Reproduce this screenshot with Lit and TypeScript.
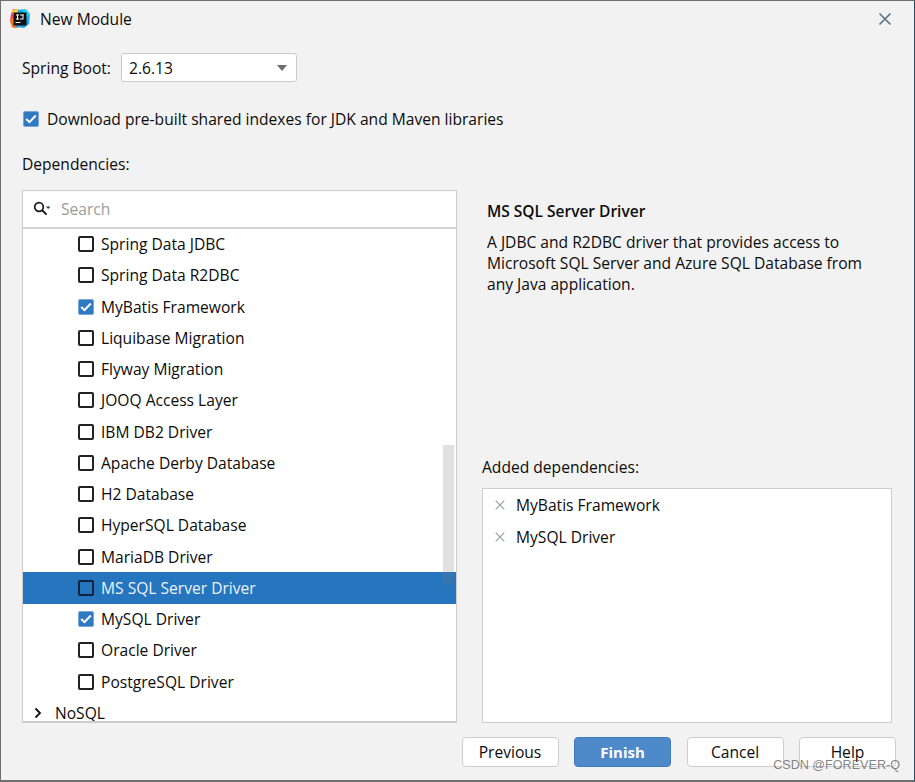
import { LitElement, html, css, svg } from "lit";
import { customElement } from "lit/decorators.js";

const rows: [string, boolean, boolean][] = [
  ["Spring Data JDBC", false, false],
  ["Spring Data R2DBC", false, false],
  ["MyBatis Framework", true, false],
  ["Liquibase Migration", false, false],
  ["Flyway Migration", false, false],
  ["JOOQ Access Layer", false, false],
  ["IBM DB2 Driver", false, false],
  ["Apache Derby Database", false, false],
  ["H2 Database", false, false],
  ["HyperSQL Database", false, false],
  ["MariaDB Driver", false, false],
  ["MS SQL Server Driver", false, true],
  ["MySQL Driver", true, false],
  ["Oracle Driver", false, false],
  ["PostgreSQL Driver", false, false],
];

const logo = svg`<svg class="logo" width="20" height="20" viewBox="0 0 20 20">
  <path d="M3 0 L9 1 L6 19 L2 18 L0 12 L1 5Z" fill="#fb3b78"/>
  <path d="M0 12 L3 8 L8 19 L3 19Z" fill="#f97a12"/>
  <path d="M2 1 L9 0 L9 5 L3 6Z" fill="#f6d32d"/>
  <path d="M8 1 L15 0 L20 5 L19 15 L14 19 L6 18Z" fill="#1aa3f0"/>
  <path d="M12 0 L17 1 L20 6 L16 9Z" fill="#22d3ee"/>
  <rect x="3.5" y="3.5" width="13" height="13" fill="#111"/>
  <rect x="6" y="5.5" width="3" height="1" fill="#fff"/><rect x="7" y="5.5" width="1" height="5" fill="#fff"/><rect x="6" y="9.5" width="3" height="1" fill="#fff"/>
  <rect x="10" y="5.5" width="3.5" height="1" fill="#fff"/><rect x="12.5" y="5.5" width="1" height="5" fill="#fff"/><rect x="10" y="9.5" width="2.5" height="1" fill="#fff"/>
  <rect x="5.5" y="13" width="5" height="1" fill="#fff"/>
</svg>`;

const closeIcon = svg`<svg width="14" height="14" viewBox="0 0 14 14"><path d="M1.5 1.5 L12.5 12.5 M12.5 1.5 L1.5 12.5" stroke="#5c7486" stroke-width="1.7" fill="none"/></svg>`;

const removeIcon = svg`<svg width="10" height="10" viewBox="0 0 10 10"><path d="M.7 .7 L9.3 9.3 M9.3 .7 L.7 9.3" stroke="#9aa0a6" stroke-width="1.2" fill="none"/></svg>`;

const searchIcon = svg`<svg width="18" height="16" viewBox="0 0 18 16"><circle cx="6" cy="6" r="4.3" fill="none" stroke="#1a1a1a" stroke-width="1.7"/><path d="M9.2 9.2 L13.6 13.6" stroke="#1a1a1a" stroke-width="2"/><path d="M13 5.5 H17.4 L15.2 8Z" fill="#333"/></svg>`;

const chevron = svg`<svg width="8" height="12" viewBox="0 0 8 12"><path d="M1.5 1.5 L6 6 L1.5 10.5" stroke="#111" stroke-width="1.8" fill="none"/></svg>`;

@customElement("app-root")
export class AppRoot extends LitElement {
  static styles = css`
    :host {
      display: block;
      width: 915px;
      height: 782px;
      font-family: "Open Sans", "Noto Sans", sans-serif;
      font-size: 15.6px;
      color: #0c0c0c;
    }
    .win {
      box-sizing: border-box;
      width: 915px;
      height: 782px;
      background: #f2f2f2;
      border-top: 1px solid #6f6f6f;
      border-left: 1px solid #6f6f6f;
      border-right: 1px solid #2b4a66;
      border-bottom: 2px solid #6f6f6f;
      display: flex;
      flex-direction: column;
      position: relative;
      overflow: hidden;
    }
    .title {
      height: 36px;
      display: flex;
      align-items: center;
      padding: 0 22px 0 9px;
      gap: 10px;
      flex: none;
    }
    .title .name { flex: 1; }
    .title svg { display: block; }
    .boot {
      display: flex;
      align-items: center;
      gap: 10px;
      margin: 16px 0 0 21px;
      height: 29px;
    }
    .combo {
      box-sizing: border-box;
      width: 176px;
      height: 29px;
      background: #fff;
      border: 1px solid #c9c9c9;
      border-radius: 3px;
      display: flex;
      align-items: center;
      justify-content: space-between;
      padding: 0 9px 0 7px;
    }
    .arrow {
      width: 0;
      height: 0;
      border-left: 5.5px solid transparent;
      border-right: 5.5px solid transparent;
      border-top: 6px solid #6e6e6e;
    }
    .cbrow {
      display: flex;
      align-items: center;
      gap: 8px;
      margin: 22.5px 0 0 22px;
      height: 29px;
    }
    .cb {
      box-sizing: border-box;
      width: 16px;
      height: 16px;
      border-radius: 2px;
      border: 2px solid #222;
      background: #fff;
      flex: none;
      display: flex;
      align-items: center;
      justify-content: center;
    }
    .cb.on { background: #2f78c2; border: 1px solid #7aa7d6; }
    .cb.sel { background: transparent; border-color: #10233a; }
    .cb svg { display: block; }
    .deps { margin: 15.5px 0 0 21px; height: 29px; display: flex; align-items: center; }
    .main {
      display: flex;
      margin: 12px 0 0 21px;
      height: 533px;
      flex: none;
    }
    .left {
      box-sizing: border-box;
      width: 435px;
      flex: none;
      border: 1px solid #cdcdcd;
      border-bottom-width: 2px;
      background: #fff;
      display: flex;
      flex-direction: column;
      position: relative;
      overflow: hidden;
    }
    .search {
      box-sizing: border-box;
      height: 37.5px;
      flex: none;
      border-bottom: 2px solid #d4d4d4;
      display: flex;
      align-items: center;
      padding-left: 10px;
      gap: 10px;
      color: #9b9b9b;
    }
    .list { flex: 1; overflow: hidden; }
    .row {
      height: 31.25px;
      display: flex;
      align-items: center;
      padding-left: 55px;
      gap: 7px;
    }
    .row.sel { background: #2675bf; color: #eaf2fa; }
    .group { padding-left: 11px; gap: 13px; }
    .thumb {
      position: absolute;
      right: 2px;
      top: 254px;
      width: 11px;
      height: 140px;
      background: rgba(120, 120, 120, 0.22);
    }
    .right {
      flex: 1;
      display: flex;
      flex-direction: column;
      min-width: 0;
    }
    .info { flex: 1; padding: 1px 40px 0 30px; }
    .info h2 {
      margin: 9px 0 10px;
      font-size: 15.5px;
      font-weight: 600;
      line-height: 22px;
      color: #0c0c0c;
    }
    .info p { margin: 0; line-height: 21px; }
    .added-label { margin-left: 25px; height: 22px; display: flex; align-items: center; }
    .added {
      box-sizing: border-box;
      margin: 10px 22px 0 25px;
      height: 235px;
      background: #fff;
      border: 1px solid #cdcdcd;
      padding: 0 0 0 12px;
    }
    .item {
      height: 32px;
      display: flex;
      align-items: center;
      gap: 11px;
    }
    .item svg { display: block; }
    .buttons {
      display: flex;
      justify-content: flex-end;
      gap: 15.5px;
      padding: 14px 18px 0 0;
    }
    .btn {
      box-sizing: border-box;
      width: 97px;
      height: 30px;
      background: #fff;
      border: 1px solid #cdcdcd;
      border-radius: 4px;
      display: flex;
      align-items: center;
      justify-content: center;
    }
    .btn.primary {
      background: #4e8ac9;
      border-color: #3f7cbc;
      color: #fff;
      font-weight: 700;
      font-size: 15px;
    }
    .wm {
      position: absolute;
      right: 14px;
      bottom: 8px;
      font-family: "Liberation Sans", sans-serif;
      font-size: 12.6px;
      color: rgba(90, 90, 90, 0.75);
    }
  `;

  private check() {
    return svg`<svg width="12" height="10" viewBox="0 0 12 10"><path d="M1.2 5 L4.5 8.2 L10.8 1.5" stroke="#fff" stroke-width="2" fill="none"/></svg>`;
  }

  private cb(on: boolean, sel = false) {
    return html`<span class="cb ${on ? "on" : ""} ${sel ? "sel" : ""}">${on ? this.check() : ""}</span>`;
  }

  render() {
    return html`
      <div class="win">
        <div class="title">${logo}<span class="name">New Module</span>${closeIcon}</div>
        <div class="boot">
          <span>Spring Boot:</span>
          <div class="combo"><span>2.6.13</span><span class="arrow"></span></div>
        </div>
        <div class="cbrow">
          ${this.cb(true)}
          <span>Download pre-built shared indexes for JDK and Maven libraries</span>
        </div>
        <div class="deps">Dependencies:</div>
        <div class="main">
          <div class="left">
            <div class="search">${searchIcon}<span>Search</span></div>
            <div class="list">
              ${rows.map(
                ([t, on, sel]) => html`<div class="row ${sel ? "sel" : ""}">${this.cb(on, sel)}<span>${t}</span></div>`
              )}
              <div class="row group">${chevron}<span>NoSQL</span></div>
            </div>
            <div class="thumb"></div>
          </div>
          <div class="right">
            <div class="info">
              <h2>MS SQL Server Driver</h2>
              <p>A JDBC and R2DBC driver that provides access to Microsoft SQL Server and Azure SQL Database from any Java application.</p>
            </div>
            <div class="added-label">Added dependencies:</div>
            <div class="added">
              <div class="item">${removeIcon}<span>MyBatis Framework</span></div>
              <div class="item">${removeIcon}<span>MySQL Driver</span></div>
            </div>
          </div>
        </div>
        <div class="buttons">
          <div class="btn">Previous</div>
          <div class="btn primary">Finish</div>
          <div class="btn">Cancel</div>
          <div class="btn">Help</div>
        </div>
        <div class="wm">CSDN @FOREVER-Q</div>
      </div>
    `;
  }
}
